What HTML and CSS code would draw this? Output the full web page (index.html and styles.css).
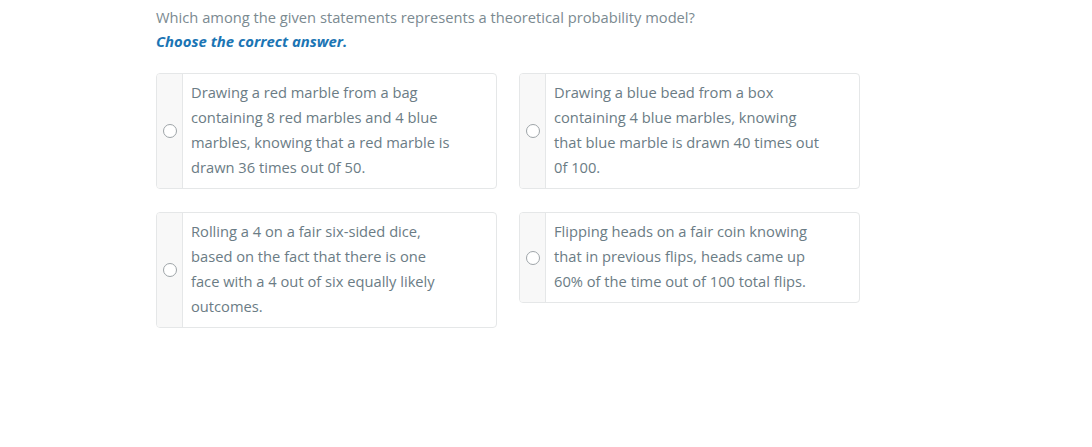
FILE: index.html
```html
<!DOCTYPE html>
<html lang="en">
<head>
    <meta charset="UTF-8">
    <meta name="viewport" content="width=device-width, initial-scale=1.0">
    <title>Question</title>
    <link rel="stylesheet" href="styles.css">
</head>
<body>
    <div class="quiz">
        <div class="question">
            <p class="prompt">Which among the given statements represents a theoretical probability model?</p>
            <p class="hint">Choose the correct answer.</p>
        </div>

        <div class="choices">
            <label class="choice">
                <span class="choice-radio"><span class="circle"></span></span>
                <span class="choice-text">Drawing a red marble from a bag containing 8 red marbles and 4 blue marbles, knowing that a red marble is drawn 36 times out 0f 50.</span>
            </label>

            <label class="choice">
                <span class="choice-radio"><span class="circle"></span></span>
                <span class="choice-text">Drawing a blue bead from a box containing 4 blue marbles, knowing that blue marble is drawn 40 times out 0f 100.</span>
            </label>

            <label class="choice">
                <span class="choice-radio"><span class="circle"></span></span>
                <span class="choice-text">Rolling a 4 on a fair six-sided dice, based on the fact that there is one face with a 4 out of six equally likely outcomes.</span>
            </label>

            <label class="choice">
                <span class="choice-radio"><span class="circle"></span></span>
                <span class="choice-text">Flipping heads on a fair coin knowing that in previous flips, heads came up 60% of the time out of 100 total flips.</span>
            </label>
        </div>
    </div>
</body>
</html>
```

FILE: styles.css
```css
* {
    margin: 0;
    padding: 0;
    box-sizing: border-box;
}

body {
    background-color: #ffffff;
    font-family: 'Open Sans', sans-serif;
    color: #6b7c85;
}

.quiz {
    width: 704px;
    margin-left: 156px;
    padding-top: 5px;
}

.prompt {
    font-size: 14.7px;
    line-height: 24px;
    color: #7b8a91;
}

.hint {
    font-size: 14.9px;
    line-height: 24px;
    font-weight: 700;
    font-style: italic;
    color: #1b75b4;
}

.choices {
    display: grid;
    grid-template-columns: 341px 341px;
    column-gap: 22px;
    row-gap: 23px;
    align-items: start;
    margin-top: 20px;
}

.choice {
    display: flex;
    border: 1px solid #e5e7e8;
    border-radius: 4px;
    overflow: hidden;
    cursor: pointer;
}

.choice-radio {
    flex: 0 0 26px;
    display: flex;
    align-items: center;
    justify-content: center;
    background-color: #f8f8f8;
    border-right: 1px solid #e5e7e8;
}

.circle {
    width: 14px;
    height: 14px;
    border: 1px solid #9ea4a8;
    border-radius: 50%;
    background-color: #ffffff;
}

.choice-text {
    flex: 1;
    padding: 6px 38px 8px 8px;
    font-size: 14.7px;
    line-height: 25px;
}
```
